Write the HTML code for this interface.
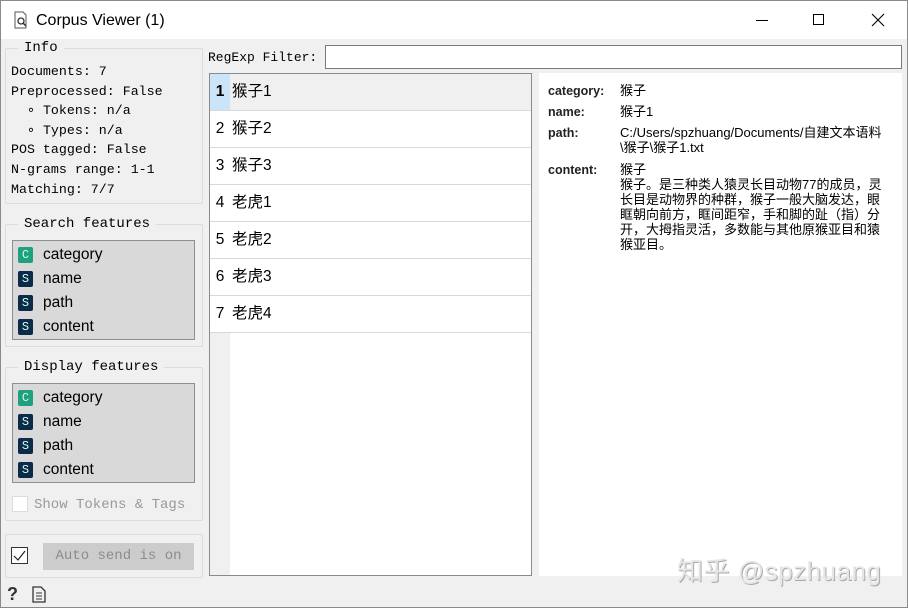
<!DOCTYPE html>
<html><head><meta charset="utf-8"><style>
*{margin:0;padding:0;box-sizing:border-box}
body{width:908px;height:608px;background:#f0f0f0;position:relative;overflow:hidden;font-family:"Liberation Sans","Noto Sans CJK SC",sans-serif;border:1px solid #8a8a8a}
.a{position:absolute}
.mono{font-family:"Liberation Mono","Noto Sans CJK SC",monospace;font-size:13.3px;color:#000}
.grp{position:absolute;border:1px solid #dcdcdc;border-radius:2px}
.gt{position:absolute;background:#f0f0f0;padding:0 6px;font-family:"Liberation Mono",monospace;font-size:14px;top:-9px;left:12px}
.list{position:absolute;background:#d9d9d9;border:1px solid #8f8f8f}
.it{height:24px;font-size:15.5px;line-height:24px;padding-left:30px;position:relative;color:#000}
.bd{position:absolute;left:5px;top:4px;width:15px;height:16px;border-radius:2px;color:#cfe;font-family:"Liberation Mono",monospace;font-size:12px;line-height:16px;text-align:center}
.c{background:#20a07e}.s{background:#0c2b48}
.row{position:absolute;left:0;width:321px;height:37px;border-bottom:1px solid #d8d8d8}
.num{position:absolute;left:0;top:0;width:20px;height:36px;font-size:15.5px;line-height:36px;text-align:center;background:#fff}
.txt{position:absolute;left:22px;top:0;font-size:15.5px;line-height:36px}
.k{position:absolute;left:9px;font-weight:bold;font-size:12.5px;color:#222}
.v{position:absolute;left:81px;font-size:13px;color:#000;line-height:15px}
</style></head><body>
<div class="a" style="left:0;top:0;width:906px;height:38px;background:#fff"></div>
<svg class="a" style="left:12px;top:10px" width="16" height="18" viewBox="0 0 16 18"><path d="M2 1h8l3 3v13H2z" fill="none" stroke="#555"/><circle cx="8" cy="10" r="3" fill="none" stroke="#333" stroke-width="1.3"/><path d="M10 12l3 3" stroke="#333" stroke-width="1.5"/></svg>
<div class="a" style="left:35px;top:11px;font-size:16px;color:#000">Corpus Viewer (1)</div>
<div class="a" style="left:755px;top:19px;width:12px;height:1px;background:#000"></div>
<div class="a" style="left:812px;top:13px;width:11px;height:11px;border:1px solid #000"></div>
<svg class="a" style="left:870px;top:12px" width="14" height="14"><path d="M1 1L13 13M13 1L1 13" stroke="#000" stroke-width="1.1"/></svg>

<div class="grp" style="left:4px;top:47px;width:198px;height:156px">
<div class="gt">Info</div></div>
<div class="a mono" style="left:10px;top:61px;line-height:19.6px">Documents: 7<br>Preprocessed: False<br>&nbsp;&nbsp;∘ Tokens: n/a<br>&nbsp;&nbsp;∘ Types: n/a<br>POS tagged: False<br>N-grams range: 1-1<br>Matching: 7/7</div>

<div class="grp" style="left:4px;top:223px;width:198px;height:123px"><div class="gt">Search features</div></div>
<div class="list" style="left:11px;top:239px;width:183px;height:100px;padding-top:2px">
<div class="it"><span class="bd c">C</span>category</div><div class="it"><span class="bd s">S</span>name</div><div class="it"><span class="bd s">S</span>path</div><div class="it"><span class="bd s">S</span>content</div></div>

<div class="grp" style="left:4px;top:366px;width:198px;height:154px"><div class="gt">Display features</div></div>
<div class="list" style="left:11px;top:382px;width:183px;height:100px;padding-top:2px">
<div class="it"><span class="bd c">C</span>category</div><div class="it"><span class="bd s">S</span>name</div><div class="it"><span class="bd s">S</span>path</div><div class="it"><span class="bd s">S</span>content</div></div>
<div class="a" style="left:11px;top:495px;width:16px;height:16px;border:1px solid #ddd;background:#fff"></div>
<div class="a mono" style="left:33px;top:496px;font-size:14px;color:#999">Show Tokens &amp; Tags</div>

<div class="grp" style="left:4px;top:533px;width:198px;height:44px"></div>
<div class="a" style="left:10px;top:546px;width:17px;height:17px;border:1px solid #333;background:#fff"></div>
<svg class="a" style="left:12px;top:549px" width="13" height="12"><path d="M1 6l4 4 7-9" fill="none" stroke="#222" stroke-width="1.2"/></svg>
<div class="a mono" style="left:42px;top:542px;width:151px;height:27px;background:#cccccc;color:#8c8c8c;font-size:14px;line-height:27px;text-align:center">Auto send is on</div>

<div class="a" style="left:6px;top:583px;font-size:18px;font-weight:bold;color:#333;line-height:20px">?</div>
<svg class="a" style="left:31px;top:585px" width="14" height="17"><path d="M1 1h8l4 4v11H1z" fill="none" stroke="#333" stroke-width="1.3"/><path d="M4 7h6M4 10h6M4 13h6" stroke="#333"/></svg>

<div class="a mono" style="left:207px;top:49px;font-size:13px">RegExp Filter:</div>
<div class="a" style="left:324px;top:44px;width:577px;height:24px;background:#fff;border:1px solid #7a7a7a"></div>

<div class="a" style="left:208px;top:72px;width:323px;height:503px;background:#fff;border:1px solid #8a8a8a">
<div class="a" style="left:0;top:0;width:20px;height:501px;background:#f0f0f0"></div>
<div class="row" style="top:0;background:#f0f0f0"><div class="num" style="background:#cce4f7;font-weight:bold">1</div><div class="txt">猴子1</div></div>
<div class="row" style="top:37px"><div class="num">2</div><div class="txt">猴子2</div></div>
<div class="row" style="top:74px"><div class="num">3</div><div class="txt">猴子3</div></div>
<div class="row" style="top:111px"><div class="num">4</div><div class="txt">老虎1</div></div>
<div class="row" style="top:148px"><div class="num">5</div><div class="txt">老虎2</div></div>
<div class="row" style="top:185px"><div class="num">6</div><div class="txt">老虎3</div></div>
<div class="row" style="top:222px"><div class="num">7</div><div class="txt">老虎4</div></div>
</div>

<div class="a" style="left:538px;top:72px;width:363px;height:503px;background:#fff">
<div class="k" style="top:11px">category:</div><div class="v" style="top:10px">猴子</div>
<div class="k" style="top:32px">name:</div><div class="v" style="top:31px">猴子1</div>
<div class="k" style="top:53px">path:</div><div class="v" style="top:52px">C:/Users/spzhuang/Documents/自建文本语料<br>\猴子\猴子1.txt</div>
<div class="k" style="top:90px">content:</div><div class="v" style="top:89px;width:272px">猴子<br>猴子。是三种类人猿灵长目动物77的成员，灵长目是动物界的种群，猴子一般大脑发达，眼眶朝向前方，眶间距窄，手和脚的趾（指）分开，大拇指灵活，多数能与其他原猴亚目和猿猴亚目。</div>
</div>
<div class="a" style="left:676px;top:550px;font-size:26px;color:#e6e6e6;text-shadow:1px 1px 0 #aaa;letter-spacing:0.5px">知乎 @spzhuang</div>
</body></html>
